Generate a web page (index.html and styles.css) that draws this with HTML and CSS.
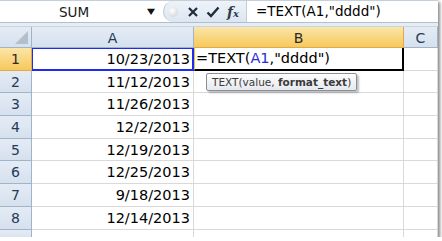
FILE: index.html
```html
<!DOCTYPE html>
<html lang="en">
<head>
    <meta charset="UTF-8">
    <title>TEXT formula</title>
    <link rel="stylesheet" href="styles.css">
</head>
<body>
    <div class="panel">
        <div class="formula-bar">
            <div class="name-box">
                <span class="name">SUM</span>
                <span class="drop">&#9660;</span>
            </div>
            <div class="bar-buttons">
                <span class="dot"></span>
                <svg class="btn-x" width="12" height="12" viewBox="0 0 12 12"><path d="M2 2 L10 10 M10 2 L2 10" stroke="#1f2a3a" stroke-width="2.2" fill="none"/></svg>
                <svg class="btn-ok" width="14" height="12" viewBox="0 0 14 12"><path d="M1.5 6.5 L5 10 L12.5 1.5" stroke="#1f2a3a" stroke-width="2.4" fill="none"/></svg>
                <span class="fx">f<sub>x</sub></span>
            </div>
            <div class="formula-input">=TEXT(A1,"dddd")</div>
        </div>
        <div class="bar-gap"></div>
        <div class="sheet">
            <div class="corner"><span class="corner-tri"></span></div>
            <div class="col-head">A</div>
            <div class="col-head active">B</div>
            <div class="col-head">C</div>

            <div class="row-head active">1</div>
            <div class="cell date ref">10/23/2013</div>
            <div class="cell editing">=TEXT(<span class="ref-text">A1</span>,"dddd")</div>
            <div class="cell"></div>

            <div class="row-head">2</div>
            <div class="cell date">11/12/2013</div>
            <div class="cell"></div>
            <div class="cell"></div>

            <div class="row-head">3</div>
            <div class="cell date">11/26/2013</div>
            <div class="cell"></div>
            <div class="cell"></div>

            <div class="row-head">4</div>
            <div class="cell date">12/2/2013</div>
            <div class="cell"></div>
            <div class="cell"></div>

            <div class="row-head">5</div>
            <div class="cell date">12/19/2013</div>
            <div class="cell"></div>
            <div class="cell"></div>

            <div class="row-head">6</div>
            <div class="cell date">12/25/2013</div>
            <div class="cell"></div>
            <div class="cell"></div>

            <div class="row-head">7</div>
            <div class="cell date">9/18/2013</div>
            <div class="cell"></div>
            <div class="cell"></div>

            <div class="row-head">8</div>
            <div class="cell date">12/14/2013</div>
            <div class="cell"></div>
            <div class="cell"></div>

            <div class="row-head"></div>
            <div class="cell"></div>
            <div class="cell"></div>
            <div class="cell"></div>
        </div>
        <div class="tooltip">TEXT(value, <b>format_text</b>)</div>
    </div>
</body>
</html>
```

FILE: styles.css
```css
body {
    margin: 0;
    background: #ffffff;
    font-family: "DejaVu Sans", sans-serif;
}

.panel {
    position: relative;
    width: 438px;
    height: 237px;
    overflow: hidden;
    background: #ffffff;
    box-shadow: 2px 2px 3px #8a8a8a;
}

.formula-bar {
    display: flex;
    height: 22px;
    border-top: 1px solid #c5cfdc;
    box-sizing: border-box;
}

.name-box {
    width: 163px;
    display: flex;
    align-items: center;
    position: relative;
}

.name {
    width: 148px;
    text-align: center;
    font-size: 13.5px;
    color: #1a1a1a;
}

.drop {
    font-size: 8px;
    color: #111;
    transform: scaleX(1.3);
}

.bar-buttons {
    width: 84px;
    display: flex;
    align-items: center;
    background: linear-gradient(#eef3f9, #dde6f1);
    border-radius: 11px 0 0 11px;
    border-left: 1px solid #b7c4d5;
    border-right: 1px solid #c3cedb;
    box-sizing: border-box;
    gap: 7px;
    padding-left: 4px;
}

.dot {
    width: 10px;
    height: 10px;
    border-radius: 50%;
    background: radial-gradient(circle at 40% 35%, #ffffff, #c8cdd4);
    margin-right: 2px;
}

.fx {
    font-family: "DejaVu Serif", serif;
    font-style: italic;
    font-weight: bold;
    font-size: 14px;
    color: #333d4a;
}

.fx sub {
    font-size: 10px;
    vertical-align: 0;
}

.formula-input {
    flex: 1;
    padding-left: 9px;
    font-size: 13.5px;
    line-height: 21px;
    color: #000;
}

.bar-gap {
    height: 5px;
    background: #e6ecf4;
    border-top: 1px solid #b2bfcf;
    border-bottom: 1px solid #c9d4e1;
    box-sizing: border-box;
}

.sheet {
    display: grid;
    grid-template-columns: 32px 162px 210px 34px;
    grid-template-rows: 21px repeat(8, 22.7px) 12px;
}

.corner,
.col-head,
.row-head {
    background: linear-gradient(#e4ebf5, #d6e1ee);
    color: #243a57;
    font-size: 14px;
    border-right: 1px solid #9fb3cb;
    border-bottom: 1px solid #9fb3cb;
    box-sizing: border-box;
    display: flex;
    align-items: center;
    justify-content: center;
}

.corner {
    justify-content: flex-end;
    align-items: flex-end;
    padding: 0 3px 3px 0;
}

.corner-tri {
    width: 0;
    height: 0;
    border-left: 13px solid transparent;
    border-bottom: 13px solid #b4bfcc;
}

.col-head {
    padding-top: 1px;
}

.col-head.active,
.row-head.active {
    background: linear-gradient(#fbe5a9, #f6c95b);
    border-color: #e3a84c;
    color: #2a2a2a;
}

.cell {
    border-right: 1px solid #d9d9d9;
    border-bottom: 1px solid #d9d9d9;
    box-sizing: border-box;
    font-size: 14.5px;
    color: #000;
    display: flex;
    align-items: center;
    padding: 0 3px;
    white-space: nowrap;
}

.date {
    justify-content: flex-end;
}

.ref {
    box-shadow: inset 0 0 0 1px #1d2df0;
    border-right: 1px solid #1d2df0;
    border-bottom: 1px solid #1d2df0;
}

.editing {
    border-right: 2px solid #000;
    border-bottom: 2px solid #000;
    border-left: 1px solid #e6c23a;
    padding-left: 1px;
}

.ref-text {
    color: #2b2bd6;
}

.tooltip {
    position: absolute;
    left: 206px;
    top: 73px;
    height: 18px;
    padding: 0 5px;
    box-sizing: border-box;
    font-size: 10.5px;
    line-height: 16px;
    color: #3b3b3b;
    background: linear-gradient(#fdfdfd, #e6e9ee);
    border: 1px solid #8a9099;
    border-radius: 2px;
    box-shadow: 2px 2px 2px rgba(0, 0, 0, 0.25);
    white-space: nowrap;
}
```
